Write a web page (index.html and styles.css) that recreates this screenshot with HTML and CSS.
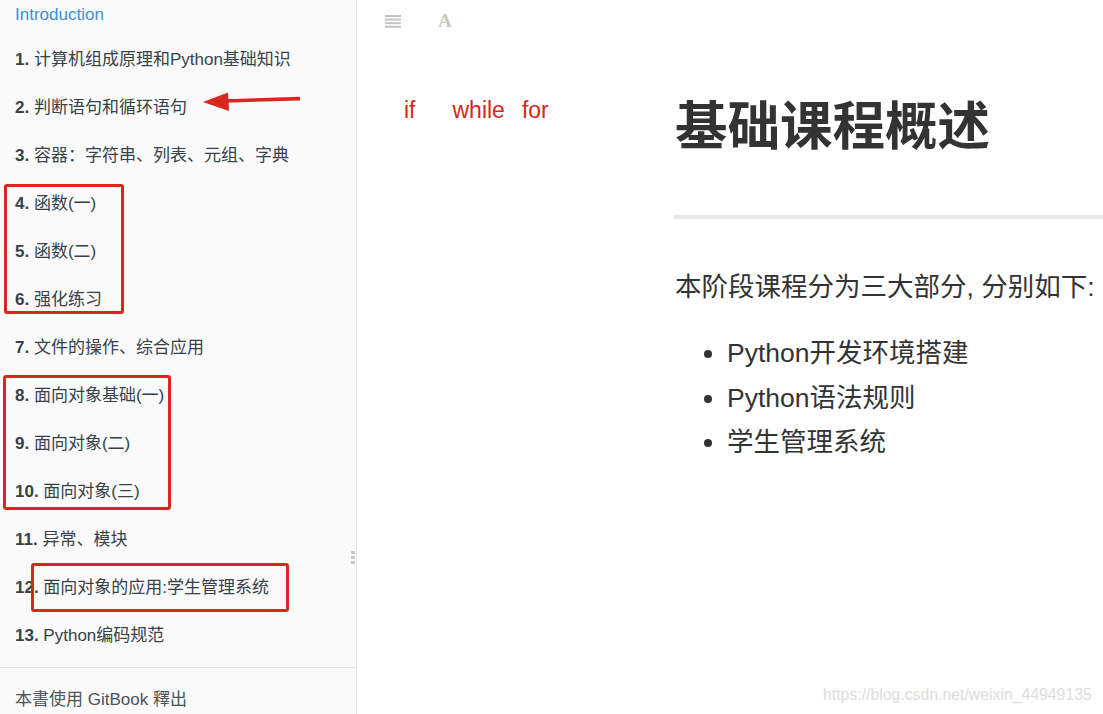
FILE: index.html
```html
<!DOCTYPE html>
<html lang="zh">
<head>
<meta charset="utf-8">
<title>基础课程概述</title>
<link rel="stylesheet" href="styles.css">
</head>
<body>
<div class="screen">
  <nav class="sidebar">
    <ul class="summary">
      <li class="intro">Introduction</li>
      <li class="item"><b>1.</b> 计算机组成原理和Python基础知识</li>
      <li class="item"><b>2.</b> 判断语句和循环语句</li>
      <li class="item"><b>3.</b> 容器：字符串、列表、元组、字典</li>
      <li class="item"><b>4.</b> 函数(一)</li>
      <li class="item"><b>5.</b> 函数(二)</li>
      <li class="item"><b>6.</b> 强化练习</li>
      <li class="item"><b>7.</b> 文件的操作、综合应用</li>
      <li class="item"><b>8.</b> 面向对象基础(一)</li>
      <li class="item"><b>9.</b> 面向对象(二)</li>
      <li class="item"><b>10.</b> 面向对象(三)</li>
      <li class="item"><b>11.</b> 异常、模块</li>
      <li class="item"><b>12.</b> 面向对象的应用:学生管理系统</li>
      <li class="item"><b>13.</b> Python编码规范</li>
    </ul>
    <div class="footer">本書使用 GitBook 釋出</div>
  </nav>
  <main class="book">
    <div class="toolbar">
      <svg class="icon-menu" width="16" height="13" viewBox="0 0 16 13">
        <rect x="0" y="0" width="16" height="2" fill="#c4c4c4"/>
        <rect x="0" y="3.6" width="16" height="2" fill="#c4c4c4"/>
        <rect x="0" y="7.2" width="16" height="2" fill="#c4c4c4"/>
        <rect x="0" y="10.8" width="16" height="2" fill="#c4c4c4"/>
      </svg>
      <span class="icon-font">A</span>
    </div>
    <div class="page">
      <h1 class="title">基础课程概述</h1>
      <p class="lead">本阶段课程分为三大部分, 分别如下:</p>
      <ul class="parts">
        <li>Python开发环境搭建</li>
        <li>Python语法规则</li>
        <li>学生管理系统</li>
      </ul>
    </div>
  </main>

  <div class="handle"><span></span><span></span><span></span></div>

  <div class="note-kw"><span class="kw-if">if</span><span class="kw-while">while</span><span class="kw-for">for</span></div>
  <div class="box box1"></div>
  <div class="box box2"></div>
  <div class="box box3"></div>
  <svg class="arrow" width="100" height="24" viewBox="0 0 100 24">
    <path d="M22 10.2 L97 7.8 L97 11.4 L22 13.8 Z" fill="#d8271d"/>
    <path d="M0 13 L25 3.5 L26 22 Z" fill="#d8271d"/>
  </svg>
  <div class="watermark">https://blog.csdn.net/weixin_44949135</div>
</div>
</body>
</html>
```
FILE: styles.css
```css
html, body {
  margin: 0;
  padding: 0;
  width: 100%;
  height: 100%;
  overflow: hidden;
  background: #ffffff;
}

.screen {
  position: relative;
  display: flex;
  width: 1103px;
  height: 714px;
  font-family: "Liberation Sans", Arial, "Noto Sans CJK SC", sans-serif;
}

.sidebar {
  flex: 0 0 356px;
  width: 356px;
  height: 714px;
  background: #fafafa;
  border-right: 1px solid #e8e8e8;
  display: flex;
  flex-direction: column;
  color: #364149;
}

.summary {
  list-style: none;
  margin: 0 0 7px 0;
  padding: 1px 0 0 0;
}

.summary li {
  padding-left: 15px;
  font-size: 17px;
  white-space: nowrap;
}

.summary .intro {
  height: 28px;
  line-height: 28px;
  margin-bottom: 7px;
  color: #3a8fe0;
}

.summary .item {
  height: 48px;
  line-height: 48px;
}

.summary .item b {
  font-weight: bold;
  color: #364149;
}

.footer {
  border-top: 1px solid #e4e4e4;
  padding-left: 15px;
  line-height: 64px;
  font-size: 17px;
  color: #4a5359;
  font-family: "Liberation Sans", Arial, "Noto Sans CJK TC", sans-serif;
}

.book {
  flex: 1;
  min-width: 0;
  overflow: hidden;
}

.toolbar {
  height: 50px;
  display: flex;
  align-items: flex-start;
  padding-left: 28px;
}

.icon-menu {
  margin-top: 15px;
}

.icon-font {
  margin-left: 37px;
  margin-top: 9px;
  font-family: "Liberation Serif", "Times New Roman", serif;
  font-weight: bold;
  font-size: 19px;
  line-height: 24px;
  color: #c8c8c8;
}

.page {
  padding-left: 317px;
  color: #333333;
}

.title {
  margin: 46px 0 0 0;
  font-size: 52.5px;
  line-height: 62px;
  font-weight: bold;
  color: #333333;
  padding-bottom: 57px;
  padding-left: 1px;
  border-bottom: 4px solid #e7e7e7;
  white-space: nowrap;
}

.lead {
  margin: 46px 0 0 1px;
  font-size: 26.5px;
  line-height: 44px;
  white-space: nowrap;
}

.parts {
  margin: 22px 0 0 0;
  padding-left: 53px;
  font-size: 26.5px;
  line-height: 44.5px;
  white-space: nowrap;
}

.handle {
  position: absolute;
  left: 351px;
  top: 551px;
  display: flex;
  flex-direction: column;
  gap: 2px;
}

.handle span {
  display: block;
  width: 4px;
  height: 3px;
  background: #c9c9c9;
}

.note-kw {
  position: absolute;
  left: 404px;
  top: 96px;
  font-size: 23px;
  line-height: 28px;
  color: #d5281c;
  white-space: nowrap;
}

.kw-while {
  margin-left: 37px;
}

.kw-for {
  margin-left: 17px;
}

.box {
  position: absolute;
  border: 3px solid #d8271d;
  border-radius: 3px;
  box-sizing: border-box;
}

.box1 {
  left: 4px;
  top: 184px;
  width: 120px;
  height: 130px;
}

.box2 {
  left: 3px;
  top: 375px;
  width: 168px;
  height: 135px;
}

.box3 {
  left: 31px;
  top: 563px;
  width: 258px;
  height: 49px;
}

.arrow {
  position: absolute;
  left: 203px;
  top: 89px;
}

.watermark {
  position: absolute;
  left: 823px;
  top: 685px;
  font-size: 15.8px;
  line-height: 20px;
  color: #dddddd;
  white-space: nowrap;
}
```
